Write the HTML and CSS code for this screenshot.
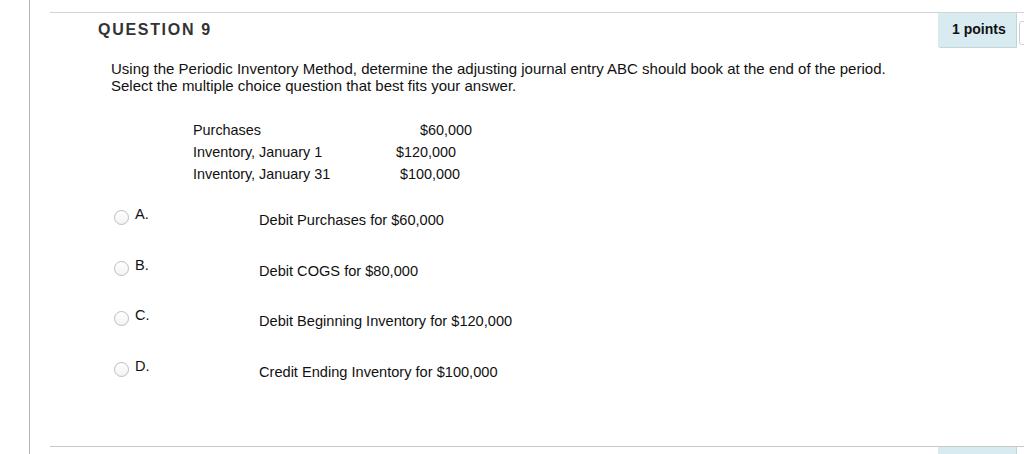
FILE: index.html
```html
<!DOCTYPE html>
<html>
<head>
<meta charset="utf-8">
<link rel="stylesheet" href="styles.css">
</head>
<body>
<div class="page">
  <div class="question">
    <div class="q-header">
      <h2 class="q-title">QUESTION 9</h2>
      <div class="points">1 points</div>
      <div class="save-btn"></div>
    </div>
    <div class="q-body">
      <p class="q-text">Using the Periodic Inventory Method, determine the adjusting journal entry ABC should book at the end of the period.<br>Select the multiple choice question that best fits your answer.</p>
      <table class="data">
        <tr><td class="lbl">Purchases</td><td class="amt amt-a">$60,000</td></tr>
        <tr><td class="lbl">Inventory, January 1</td><td class="amt amt-b">$120,000</td></tr>
        <tr><td class="lbl">Inventory, January 31</td><td class="amt amt-c">$100,000</td></tr>
      </table>
      <ul class="options">
        <li class="opt"><span class="radio"></span><span class="letter">A.</span><span class="answer">Debit Purchases for $60,000</span></li>
        <li class="opt"><span class="radio"></span><span class="letter">B.</span><span class="answer">Debit COGS for $80,000</span></li>
        <li class="opt"><span class="radio"></span><span class="letter">C.</span><span class="answer">Debit Beginning Inventory for $120,000</span></li>
        <li class="opt"><span class="radio"></span><span class="letter">D.</span><span class="answer">Credit Ending Inventory for $100,000</span></li>
      </ul>
    </div>
  </div>
  <div class="question next">
    <div class="q-header">
      <div class="q-title"></div>
      <div class="points"></div>
      <div class="save-btn"></div>
    </div>
  </div>
</div>
</body>
</html>
```

FILE: styles.css
```css
html, body {
  margin: 0;
  padding: 0;
  background: #fff;
  overflow: hidden;
}
body {
  font-family: "Liberation Sans", Arial, sans-serif;
  color: #111;
  width: 1024px;
  height: 454px;
}
.page {
  margin-left: 29px;
  border-left: 1px solid #b4b4b4;
  padding-left: 20px;
  padding-top: 12px;
  height: 442px;
  overflow: hidden;
}
.question {
  border-top: 1px solid #d4d4d4;
  width: 1001px;
}
.question.next {
  border-top-color: #c8c8c8;
}
.q-header {
  display: flex;
  align-items: center;
  height: 36px;
}
.q-title {
  margin: -2px 0 0 48px;
  font-size: 16px;
  font-weight: bold;
  letter-spacing: 1.7px;
  color: #333;
  flex: 1;
}
.points {
  width: 79px;
  height: 35px;
  box-sizing: border-box;
  background: #d8ebf1;
  border-right: 1px solid #c3d6dc;
  border-bottom: 1px solid #c3d6dc;
  border-bottom-left-radius: 3px;
  font-size: 14px;
  font-weight: bold;
  color: #111;
  display: flex;
  align-items: center;
  padding-left: 14px;
  padding-bottom: 3px;
  align-self: flex-start;
}
.save-btn {
  width: 32px;
  height: 24px;
  margin-left: 2px;
  margin-top: 8px;
  align-self: flex-start;
  background: #fff;
  border: 1px solid #d0d0d0;
  border-radius: 3px;
  box-sizing: border-box;
}
.q-body {
  padding-left: 61px;
  padding-top: 11px;
  height: 386px;
}
.q-text {
  margin: 0;
  font-size: 15px;
  line-height: 17px;
  color: #111;
}
.data {
  border-collapse: collapse;
  margin-top: 25px;
  margin-left: 82px;
  font-size: 14.4px;
}
.data td {
  padding: 0;
  height: 22px;
  vertical-align: middle;
}
.lbl {
  width: 203px;
}
.amt-a { padding-left: 24px !important; }
.amt-b { padding-left: 0; }
.amt-c { padding-left: 4px !important; }
.options {
  list-style: none;
  margin: 23px 0 0 0;
  padding: 0;
}
.opt {
  display: flex;
  align-items: flex-start;
  height: 50.5px;
  font-size: 14.6px;
}
.radio {
  width: 15px;
  height: 15px;
  box-sizing: border-box;
  border: 1px solid #bdbdbd;
  border-radius: 50%;
  background: linear-gradient(#ffffff, #f3f3f3);
  margin-left: 3px;
  margin-top: 2px;
}
.letter {
  margin-left: 6px;
  width: 124px;
  line-height: 16px;
  margin-top: -2px;
}
.answer {
  margin-top: 4px;
  line-height: 16px;
}
```
